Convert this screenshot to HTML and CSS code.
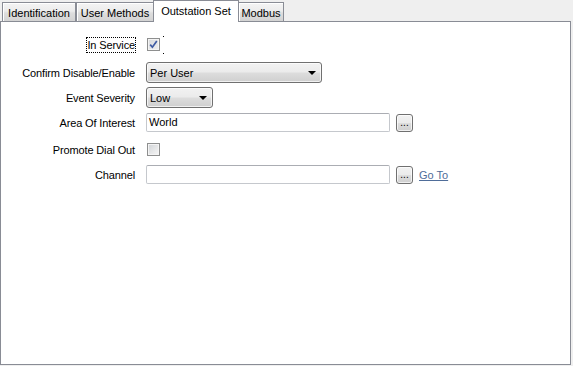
FILE: index.html
```html
<!DOCTYPE html>
<html>
<head>
<meta charset="utf-8">
<link rel="stylesheet" href="styles.css">
</head>
<body>
<div class="window">
  <div class="tabs">
    <div class="tab tab-ident">Identification</div>
    <div class="tab tab-user">User Methods</div>
    <div class="tab tab-sel">Outstation Set</div>
    <div class="tab tab-modbus">Modbus</div>
  </div>
  <div class="panel">
    <div class="form">
      <div class="row row-inservice">
        <div class="label"><span class="focus">In Service</span></div>
        <div class="ctrl">
          <span class="check checked">
            <svg width="9" height="9" viewBox="0 0 9 9"><path d="M1.2 4.6 L3.4 7.2 L7.8 1" fill="none" stroke="#3f5ba3" stroke-width="1.7"/></svg>
          </span>
          <span class="dot dot-top"></span>
          <span class="dot dot-bottom"></span>
        </div>
      </div>
      <div class="row row-confirm">
        <div class="label">Confirm Disable/Enable</div>
        <div class="ctrl">
          <div class="combo combo-wide"><span>Per User</span><span class="arrow"></span></div>
        </div>
      </div>
      <div class="row row-severity">
        <div class="label">Event Severity</div>
        <div class="ctrl">
          <div class="combo combo-small"><span>Low</span><span class="arrow"></span></div>
        </div>
      </div>
      <div class="row row-area">
        <div class="label">Area Of Interest</div>
        <div class="ctrl">
          <div class="textbox">World</div>
          <div class="ellipsis"><span>...</span></div>
        </div>
      </div>
      <div class="row row-promote">
        <div class="label">Promote Dial Out</div>
        <div class="ctrl">
          <span class="check"></span>
        </div>
      </div>
      <div class="row row-channel">
        <div class="label">Channel</div>
        <div class="ctrl">
          <div class="textbox"></div>
          <div class="ellipsis"><span>...</span></div>
          <a class="goto" href="#">Go To</a>
        </div>
      </div>
    </div>
  </div>
</div>
</body>
</html>
```

FILE: styles.css
```css
html, body {
  margin: 0;
  padding: 0;
  background: #efefef;
}
body {
  width: 573px;
  height: 366px;
  overflow: hidden;
  font-family: "Liberation Sans", Arial, sans-serif;
  font-size: 11px;
  color: #000;
}
.window {
  display: flex;
  flex-direction: column;
}
.tabs {
  display: flex;
  align-items: flex-end;
  height: 21px;
}
.tab {
  box-sizing: border-box;
  height: 19px;
  border: 1px solid #898c95;
  border-bottom: none;
  background: linear-gradient(#f4f4f4 0%, #ececec 45%, #dedede 55%, #d3d3d3 100%);
  box-shadow: inset 1px 1px 0 #ffffff;
  display: flex;
  align-items: center;
  justify-content: center;
  padding-top: 2px;
  white-space: nowrap;
}
.tab-ident { margin-left: 2px; width: 74px; }
.tab-user { width: 78px; }
.tab-sel {
  margin-left: -1px;
  width: 86px;
  height: 22px;
  margin-bottom: -1px;
  background: #ffffff;
  box-shadow: none;
  position: relative;
  z-index: 1;
  padding-top: 0;
  padding-bottom: 2px;
}
.tab-modbus { margin-left: -1px; width: 46px; }
.panel {
  box-sizing: border-box;
  width: 571px;
  height: 344px;
  border: 1px solid #898c95;
  background: #ffffff;
}
.form {
  display: flex;
  flex-direction: column;
  padding-top: 14px;
}
.row {
  display: grid;
  grid-template-columns: 134px auto;
  column-gap: 11px;
  align-items: center;
}
.label {
  text-align: right;
  white-space: nowrap;
  letter-spacing: -0.13px;
}
.ctrl {
  display: flex;
  align-items: center;
  position: relative;
}
.row-inservice { height: 17px; }
.row-confirm { height: 21px; margin-top: 9px; }
.row-severity { height: 21px; margin-top: 4px; }
.row-area { height: 19px; margin-top: 5px; }
.row-promote { height: 19px; margin-top: 8px; }
.row-channel { height: 19px; margin-top: 6px; }
.focus {
  border: 1px dotted #000;
  padding: 1px 0 1px 0;
  margin-right: -1px;
}
.check {
  box-sizing: border-box;
  width: 13px;
  height: 13px;
  margin-left: 1px;
  border: 1px solid #8e8f8f;
  background: linear-gradient(135deg, #cfd2d6 0%, #e8e9ea 60%, #f6f6f6 100%);
  box-shadow: inset 0 0 0 1px #f4f4f4;
  display: flex;
  align-items: center;
  justify-content: center;
}
.check.checked {
  background: linear-gradient(135deg, #d7d9dc 0%, #e6e7e9 60%, #eeeeee 100%);
}
.dot {
  position: absolute;
  width: 1px;
  height: 1px;
  background: #000;
  left: 17px;
}
.dot-top { top: -2px; }
.dot-bottom { top: 15px; }
.combo {
  box-sizing: border-box;
  height: 21px;
  border: 1px solid #707070;
  border-radius: 3px;
  background: linear-gradient(#f2f2f2 0%, #ebebeb 48%, #dddddd 52%, #cfcfcf 100%);
  box-shadow: inset 0 0 0 1px rgba(255,255,255,0.7);
  display: flex;
  align-items: center;
  justify-content: space-between;
  padding: 0 5px 0 3px;
}
.combo-wide { width: 176px; }
.combo-small { width: 67px; }
.arrow {
  width: 0;
  height: 0;
  border-left: 4px solid transparent;
  border-right: 4px solid transparent;
  border-top: 4px solid #000;
}
.textbox {
  box-sizing: border-box;
  width: 244px;
  height: 19px;
  border: 1px solid #c5c8cd;
  border-top-color: #abadb3;
  border-radius: 2px;
  background: #fff;
  padding: 1px 0 0 2px;
  line-height: 15px;
}
.ellipsis {
  box-sizing: border-box;
  width: 17px;
  height: 18px;
  margin-left: 6px;
  border: 1px solid #707070;
  border-radius: 3px;
  background: linear-gradient(#f2f2f2 0%, #ebebeb 48%, #dddddd 52%, #cfcfcf 100%);
  box-shadow: inset 0 0 0 1px rgba(255,255,255,0.7);
  display: flex;
  align-items: flex-end;
  justify-content: center;
  font-size: 10px;
  line-height: 10px;
  padding-bottom: 3px;
}
.goto {
  margin-left: 6px;
  color: #4f6d99;
  text-decoration: underline;
}
```
